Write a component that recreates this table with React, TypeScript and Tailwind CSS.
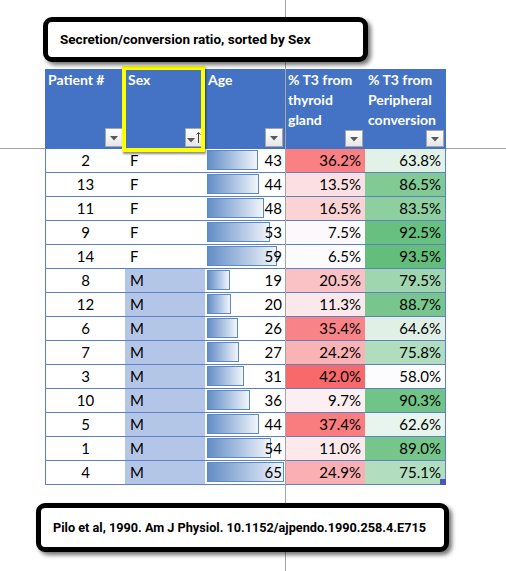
import React from 'react';

type Row = { id: number; sex: 'F' | 'M'; age: number; thyroid: number; peripheral: number };

const ROWS: Row[] = [
  { id: 2, sex: 'F', age: 43, thyroid: 36.2, peripheral: 63.8 },
  { id: 13, sex: 'F', age: 44, thyroid: 13.5, peripheral: 86.5 },
  { id: 11, sex: 'F', age: 48, thyroid: 16.5, peripheral: 83.5 },
  { id: 9, sex: 'F', age: 53, thyroid: 7.5, peripheral: 92.5 },
  { id: 14, sex: 'F', age: 59, thyroid: 6.5, peripheral: 93.5 },
  { id: 8, sex: 'M', age: 19, thyroid: 20.5, peripheral: 79.5 },
  { id: 12, sex: 'M', age: 20, thyroid: 11.3, peripheral: 88.7 },
  { id: 6, sex: 'M', age: 26, thyroid: 35.4, peripheral: 64.6 },
  { id: 7, sex: 'M', age: 27, thyroid: 24.2, peripheral: 75.8 },
  { id: 3, sex: 'M', age: 31, thyroid: 42.0, peripheral: 58.0 },
  { id: 10, sex: 'M', age: 36, thyroid: 9.7, peripheral: 90.3 },
  { id: 5, sex: 'M', age: 44, thyroid: 37.4, peripheral: 62.6 },
  { id: 1, sex: 'M', age: 54, thyroid: 11.0, peripheral: 89.0 },
  { id: 4, sex: 'M', age: 65, thyroid: 24.9, peripheral: 75.1 },
];

// two-colour scale like Excel conditional formatting
const mix = (t: number, to: [number, number, number]) => {
  const from = [252, 252, 255];
  const c = from.map((f, i) => Math.round(f + (to[i] - f) * t));
  return `rgb(${c[0]}, ${c[1]}, ${c[2]})`;
};
const redScale = (v: number) => mix((v - 6.5) / (42 - 6.5), [248, 105, 107]);
const greenScale = (v: number) => mix((v - 58) / (93.5 - 58), [99, 190, 123]);
const barWidth = (age: number) => 23 + ((age - 19) * 54) / 46;

const FilterButton: React.FC<{ sorted?: boolean }> = ({ sorted }) => (
  <div className="self-end mr-[2px] mb-[2px] w-[18px] h-[19px] border border-[#a6a6a6] bg-linear-to-b from-white to-[#e6e6e6] flex items-center justify-center gap-[1px]">
    <svg width="8" height="5" viewBox="0 0 8 5" className={sorted ? 'mt-[6px]' : 'mt-[1px]'}>
      <path d="M0 0 H8 L4 4.5 Z" fill="#595959" />
    </svg>
    {sorted && (
      <svg width="5" height="11" viewBox="0 0 5 11">
        <path d="M2.5 0.5 V11 M0.5 2.5 L2.5 0.5 L4.5 2.5" stroke="#404040" strokeWidth="1" fill="none" />
      </svg>
    )}
  </div>
);

const HeaderCell: React.FC<{ lines: string[]; sorted?: boolean; children?: React.ReactNode }> = ({ lines, sorted, children }) => (
  <div className="relative flex flex-col justify-between h-[80px] bg-[#4472c4] text-white font-bold text-[14px] leading-[20px] pl-[3px] pt-[1px]">
    <div>
      {lines.map((l) => (
        <div key={l}>{l}</div>
      ))}
    </div>
    <FilterButton sorted={sorted} />
    {children}
  </div>
);

const App: React.FC = () => {
  return (
    <div className="relative w-[506px] h-[571px] overflow-hidden bg-white">
      {/* sheet split lines */}
      <div className="absolute left-[285px] top-0 w-px h-full bg-[#a5a5a5] z-10"></div>
      <div className="absolute left-0 top-[148px] w-full h-px bg-[#a5a5a5] z-0"></div>

      <div className="pt-[17px]">
        <div className="relative z-20 ml-[43px] w-[325px] h-[45px] border-[5px] border-black rounded-[9px] bg-white shadow-[3px_3px_4px_rgba(0,0,0,0.55)] flex items-center pl-[12px] font-['Roboto',sans-serif] font-bold text-[13.5px] text-black">
          Secretion/conversion ratio, sorted by Sex
        </div>

        <div className="relative mt-[7px] ml-[45px] w-[401px] font-['Lato',sans-serif] text-black">
          <div className="grid grid-cols-[80px_80px_80px_80px_81px]">
            <HeaderCell lines={['Patient #']} />
            <HeaderCell lines={['Sex']} sorted>
              <div className="absolute -left-[3px] -top-[3px] w-[83px] h-[86px] border-4 border-[#ffff00] shadow-[1px_2px_2px_rgba(0,0,0,0.45)] z-[5]"></div>
            </HeaderCell>
            <HeaderCell lines={['Age']} />
            <HeaderCell lines={['% T3 from', 'thyroid', 'gland']} />
            <HeaderCell lines={['% T3 from', 'Peripheral', 'conversion']} />
          </div>

          <div className="border-l border-r border-[#5b80c6]">
            {ROWS.map((r) => (
              <div key={r.id} className="grid grid-cols-[79px_80px_80px_80px_80px] h-[24px] border-b border-[#5b80c6] text-[15px] leading-none">
                <div className="flex items-center justify-center">{r.id}</div>
                <div className={`flex items-center pl-[5px] ${r.sex === 'M' ? 'bg-[#b4c6e7]' : 'bg-white'}`}>{r.sex}</div>
                <div className="relative flex items-center justify-end pr-[3px]">
                  <div
                    className="absolute left-[2px] top-[1px] h-[20px] border border-[#5a8ac6] bg-linear-to-r from-[#638ec6] to-[#f2f5fa]"
                    style={{ width: barWidth(r.age) }}
                  ></div>
                  <span className="relative">{r.age}</span>
                </div>
                <div className="flex items-center justify-end pr-[4px]" style={{ backgroundColor: redScale(r.thyroid) }}>
                  {r.thyroid.toFixed(1)}%
                </div>
                <div className="flex items-center justify-end pr-[4px]" style={{ backgroundColor: greenScale(r.peripheral) }}>
                  {r.peripheral.toFixed(1)}%
                </div>
              </div>
            ))}
          </div>
          <div className="absolute right-0 bottom-0 w-[6px] h-[6px] bg-[#4458b8]"></div>
        </div>

        <div className="relative z-20 mt-[18px] ml-[36px] w-[413px] h-[49px] border-[5px] border-black rounded-[9px] bg-white shadow-[3px_3px_4px_rgba(0,0,0,0.55)] flex items-center pl-[12px] font-['Roboto',sans-serif] font-bold text-[12.7px] text-black">
          Pilo et al, 1990. Am J Physiol. 10.1152/ajpendo.1990.258.4.E715
        </div>
      </div>
    </div>
  );
};

export default App;
